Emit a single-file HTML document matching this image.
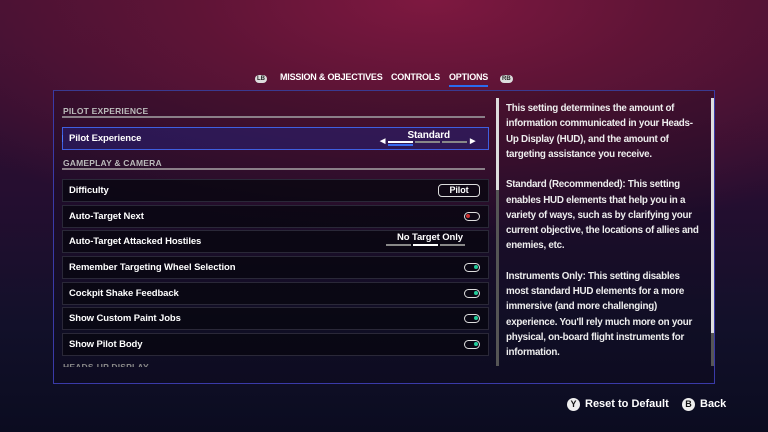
<!DOCTYPE html>
<html><head><style>
*{margin:0;padding:0;box-sizing:border-box}
body{width:768px;height:432px;overflow:hidden;font-family:"Liberation Sans",sans-serif;color:#fff;
background:radial-gradient(ellipse 600px 240px at 430px 0px,#7e1840 0%,#5e1436 40%,rgba(50,14,45,0) 100%),linear-gradient(180deg,#3c1032 0%,#250e30 45%,#12102a 75%,#0b0c20 100%);position:relative}
.abs{position:absolute}
.tabs{top:72px;left:0;width:768px;font-size:9px;font-weight:bold;letter-spacing:-0.2px}
.tab{position:absolute;top:0}
.btn{display:inline-block;background:#ddd;color:#222;font-size:6px;border-radius:4px;padding:1px 2px;font-weight:bold;letter-spacing:0}
.panel{left:53px;top:90px;width:662px;height:294px;border:1px solid #3a3aa8;border-top:1px solid #3a3a90;background:rgba(10,8,25,0.25)}
.hdr{left:63px;font-size:8.5px;font-weight:bold;color:#bbb;letter-spacing:.2px}
.hline{left:62px;width:423px;height:2px;background:#8a7f88}
.row{left:62px;width:427px;height:23px;background:rgba(8,6,16,0.78);border:1px solid #2a2838;font-size:9.5px;font-weight:bold;line-height:21px;padding-left:6px;letter-spacing:-0.1px}
.tog{position:absolute;right:8px;top:6px;width:16px;height:9px;border:1.5px solid #ddd;border-radius:5px}
.tog i{position:absolute;right:1px;top:1px;width:4px;height:4px;border-radius:50%;background:#2c9}
.desc{left:506px;top:101px;width:206px;font-size:9.8px;font-weight:bold;line-height:15.25px;color:#eee;letter-spacing:-0.25px;white-space:nowrap}
.sb{width:3px;background:#555}
</style></head><body>
<div class="abs tabs">
<span class="tab" style="left:255px"><span class="btn">LB</span></span>
<span class="tab" style="left:280px">MISSION &amp; OBJECTIVES</span>
<span class="tab" style="left:391px">CONTROLS</span>
<span class="tab" style="left:449px">OPTIONS</span>
<span class="abs" style="left:449px;top:13px;width:39px;height:2px;background:#2a6cf0"></span>
<span class="tab" style="left:500px"><span class="btn">RB</span></span>
</div>
<div class="abs panel"></div>
<div class="abs hdr" style="top:106px">PILOT EXPERIENCE</div>
<div class="abs hline" style="top:116px"></div>
<div class="abs row" style="top:127px;background:rgba(40,30,110,0.6);border:1px solid #3f5fe0">Pilot Experience
<span class="abs" style="left:-1px;top:7px;width:1px;height:7px;background:#4a7aff"></span>
<span class="abs" style="right:38px;top:-3px;font-size:10px">Standard</span>
<span class="abs" style="right:12px;top:13px;width:96px;height:2px;">
<span class="abs" style="left:0;top:-3px;font-size:7px;line-height:7px">◀</span>
<span class="abs" style="left:8px;top:0;width:25px;height:2px;background:#fff"></span>
<span class="abs" style="left:8px;top:3px;width:25px;height:2px;background:#3a6cf0"></span>
<span class="abs" style="left:35px;top:0;width:25px;height:2px;background:#888"></span>
<span class="abs" style="left:62px;top:0;width:25px;height:2px;background:#888"></span>
<span class="abs" style="left:90px;top:-3px;font-size:7px;line-height:7px">▶</span></span>
</div>
<div class="abs hdr" style="top:158px">GAMEPLAY &amp; CAMERA</div>
<div class="abs hline" style="top:168px"></div>
<div class="abs row" style="top:179px">Difficulty<span class="abs" style="right:8px;top:4px;width:42px;height:13px;border:1.5px solid #ddd;border-radius:4px;font-size:9px;line-height:10px;text-align:center">Pilot</span></div>
<div class="abs row" style="top:205px">Auto-Target Next<span class="tog"><i style="left:1px;right:auto;background:#c33"></i></span></div>
<div class="abs row" style="top:230px">Auto-Target Attacked Hostiles<span class="abs" style="right:25px;top:-4px;font-size:9.5px">No Target Only</span>
<span class="abs" style="right:77px;top:13px;width:25px;height:2px;background:#888"></span>
<span class="abs" style="right:50px;top:13px;width:25px;height:2px;background:#fff"></span>
<span class="abs" style="right:23px;top:13px;width:25px;height:2px;background:#888"></span></div>
<div class="abs row" style="top:256px">Remember Targeting Wheel Selection<span class="tog"><i></i></span></div>
<div class="abs row" style="top:282px">Cockpit Shake Feedback<span class="tog"><i></i></span></div>
<div class="abs row" style="top:307px">Show Custom Paint Jobs<span class="tog"><i></i></span></div>
<div class="abs row" style="top:333px">Show Pilot Body<span class="tog"><i></i></span></div>
<div class="abs hdr" style="top:362px;height:5px;overflow:hidden;color:#888">HEADS-UP DISPLAY</div>
<div class="abs sb" style="left:496px;top:98px;height:268px"></div>
<div class="abs sb" style="left:496px;top:98px;height:92px;background:#ddd"></div>
<div class="abs sb" style="left:711px;top:98px;height:268px"></div>
<div class="abs sb" style="left:711px;top:98px;height:235px;background:#ddd"></div>
<div class="abs desc">This setting determines the amount of<br>information communicated in your Heads-<br>Up Display (HUD), and the amount of<br>targeting assistance you receive.<br><br>Standard (Recommended): This setting<br>enables HUD elements that help you in a<br>variety of ways, such as by clarifying your<br>current objective, the locations of allies and<br>enemies, etc.<br><br>Instruments Only: This setting disables<br>most standard HUD elements for a more<br>immersive (and more challenging)<br>experience. You'll rely much more on your<br>physical, on-board flight instruments for<br>information.</div>
<div class="abs" style="left:567px;top:398px;width:13px;height:13px;border-radius:50%;background:#eee;color:#111;font-size:9px;font-weight:bold;text-align:center;line-height:13px">Y</div>
<div class="abs" style="left:585px;top:398px;font-size:11px;font-weight:bold">Reset to Default</div>
<div class="abs" style="left:682px;top:398px;width:13px;height:13px;border-radius:50%;background:#eee;color:#111;font-size:9px;font-weight:bold;text-align:center;line-height:13px">B</div>
<div class="abs" style="left:700px;top:398px;font-size:11px;font-weight:bold">Back</div>
</body></html>
